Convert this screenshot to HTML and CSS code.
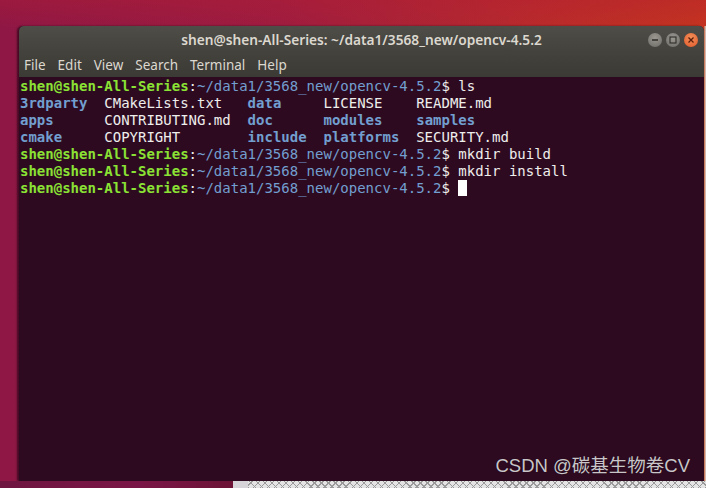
FILE: index.html
```html
<!DOCTYPE html>
<html lang="en">
<head>
    <meta charset="UTF-8">
    <title>Terminal</title>
    <link rel="stylesheet" href="styles.css">
</head>
<body>
    <div class="desktop">
        <div class="window">
            <div class="titlebar">
                <span class="title">shen@shen-All-Series: ~/data1/3568_new/opencv-4.5.2</span>
                <div class="win-buttons">
                    <span class="wbtn"><svg width="8" height="8" viewBox="0 0 8 8"><path d="M1 4H7" stroke="#2e2d29" stroke-width="1.4"/></svg></span>
                    <span class="wbtn"><svg width="8" height="8" viewBox="0 0 8 8"><rect x="1" y="1" width="6" height="6" fill="none" stroke="#2e2d29" stroke-width="1.1"/></svg></span>
                    <span class="wbtn close"><svg width="8" height="8" viewBox="0 0 8 8"><path d="M1.5 1.5L6.5 6.5M6.5 1.5L1.5 6.5" stroke="#5a1d0a" stroke-width="1.3"/></svg></span>
                </div>
            </div>
            <div class="menubar">
                <span>File</span>
                <span>Edit</span>
                <span>View</span>
                <span>Search</span>
                <span>Terminal</span>
                <span>Help</span>
            </div>
            <pre class="term"><span class="user">shen@shen-All-Series</span>:<span class="path">~/data1/3568_new/opencv-4.5.2</span>$ ls
<span class="dir">3rdparty</span>  CMakeLists.txt   <span class="dir">data</span>     LICENSE    README.md
<span class="dir">apps</span>      CONTRIBUTING.md  <span class="dir">doc</span>      <span class="dir">modules</span>    <span class="dir">samples</span>
<span class="dir">cmake</span>     COPYRIGHT        <span class="dir">include</span>  <span class="dir">platforms</span>  SECURITY.md
<span class="user">shen@shen-All-Series</span>:<span class="path">~/data1/3568_new/opencv-4.5.2</span>$ mkdir build
<span class="user">shen@shen-All-Series</span>:<span class="path">~/data1/3568_new/opencv-4.5.2</span>$ mkdir install
<span class="user">shen@shen-All-Series</span>:<span class="path">~/data1/3568_new/opencv-4.5.2</span>$ <span class="cursor"> </span></pre>
            <div class="watermark">CSDN @碳基生物卷CV</div>
        </div>
        <div class="right-edge"></div>
    </div>
    <div class="bottom-strip">
        <div class="strip-pink"></div>
        <div class="strip-grey"></div>
        <div class="strip-check"></div>
    </div>
</body>
</html>
```

FILE: styles.css
```css
html, body {
    margin: 0;
    height: 100%;
}
body {
    background: linear-gradient(90deg, #8e1745 0%, #9e1c40 40%, #b82a2c 75%, #c4341f 100%);
    overflow: hidden;
}
.desktop {
    display: flex;
    padding-top: 26px;
    padding-left: 19px;
    height: 455px;
    background: linear-gradient(180deg, rgba(180, 30, 50, 0.35) 0%, rgba(0, 0, 0, 0) 30px);
}
.window {
    width: 685px;
    display: flex;
    flex-direction: column;
    background-color: #2e0a21;
    box-shadow: -2px 0 2px rgba(20, 0, 15, 0.6);
    border-radius: 5px 5px 0 0;
    overflow: hidden;
}
.right-edge {
    width: 2px;
    background: linear-gradient(90deg, #c8603a 0%, #d8d3cf 100%);
}
.titlebar {
    height: 26px;
    display: flex;
    align-items: center;
    justify-content: center;
    position: relative;
    background: linear-gradient(180deg, #4e4d48 0%, #43423d 100%);
}
.title {
    font-family: "Noto Sans", "DejaVu Sans", sans-serif;
    font-size: 13.7px;
    font-weight: 600;
    color: #dcd8cf;
}
.win-buttons {
    position: absolute;
    right: 6px;
    top: 7px;
    display: flex;
    gap: 4px;
}
.wbtn {
    width: 14px;
    height: 14px;
    border-radius: 50%;
    background: radial-gradient(circle at 50% 35%, #9a9891 0%, #6d6b65 100%);
    display: flex;
    align-items: center;
    justify-content: center;
}
.wbtn.close {
    background: radial-gradient(circle at 50% 35%, #f4915a 0%, #e0582a 100%);
}
.menubar {
    height: 25px;
    display: flex;
    align-items: center;
    gap: 12px;
    padding-left: 5px;
    background: linear-gradient(180deg, #43423d 0%, #3b3a35 100%);
    font-family: "Noto Sans", "DejaVu Sans", sans-serif;
    font-size: 13.5px;
    color: #dcd8cf;
}
.term {
    margin: 0;
    padding: 1px 0 0 1px;
    font-family: "DejaVu Sans Mono", monospace;
    font-size: 14px;
    line-height: 17px;
    color: #eeeeec;
    flex: 1;
}
.user {
    color: #8ae234;
    font-weight: bold;
}
.path {
    color: #729fcf;
}
.dir {
    color: #729fcf;
    font-weight: bold;
}
.cursor {
    background-color: #ffffff;
}
.watermark {
    align-self: flex-end;
    padding: 0 14px 4px 0;
    font-family: "Liberation Sans", "Noto Sans CJK SC", sans-serif;
    font-size: 18.5px;
    color: #c9c5c8;
    text-shadow: 0 0 1px rgba(0, 0, 0, 0.6);
}
.bottom-strip {
    display: flex;
    height: 7px;
}
.strip-pink {
    width: 233px;
    background: linear-gradient(90deg, #6e1540 0%, #7a1647 60%, #6c1336 100%);
}
.strip-grey {
    width: 15px;
    background-color: #d6d4d8;
}
.strip-check {
    flex: 1;
    background-color: #e4e4e4;
    background-image: repeating-linear-gradient(45deg, #9a9a9a 0 1px, transparent 1px 5px), repeating-linear-gradient(-45deg, #9a9a9a 0 1px, transparent 1px 5px);
}
```
